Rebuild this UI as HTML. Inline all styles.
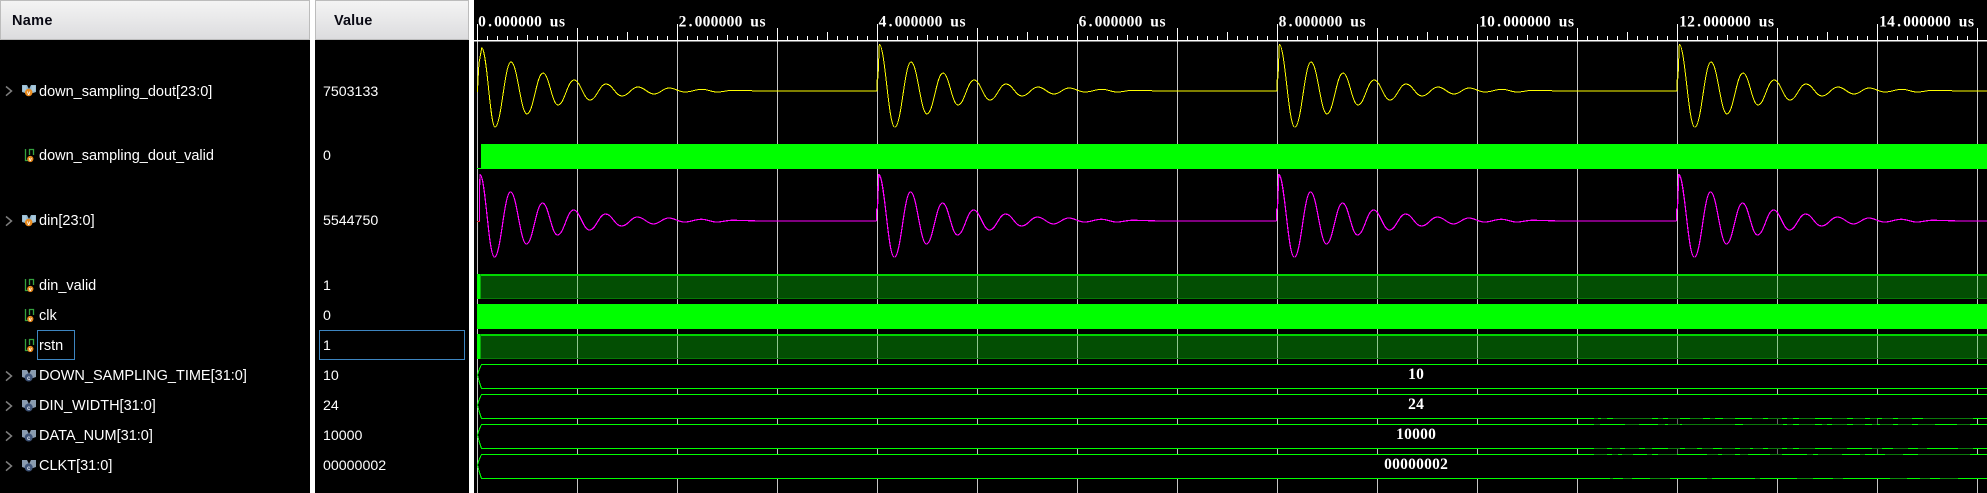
<!DOCTYPE html>
<html lang="en">
<head>
<meta charset="utf-8">
<title>Waveform</title>
<style>
html,body{margin:0;padding:0;background:#000;width:1987px;height:493px;overflow:hidden}
svg{display:block}
.n{font-family:"Liberation Sans",sans-serif;font-size:14.5px;fill:#fff}
.v{font-family:"Liberation Sans",sans-serif;font-size:14.2px;fill:#fff}
.h{font-family:"Liberation Sans",sans-serif;font-size:14.5px;font-weight:bold;fill:#0a0a14}
.r{font-family:"Liberation Serif",serif;font-size:15.5px;font-weight:bold;fill:#fff;text-anchor:middle}
.c{shape-rendering:crispEdges}
</style>
</head>
<body>
<svg width="1987" height="493" viewBox="0 0 1987 493" xmlns="http://www.w3.org/2000/svg">
<defs>
<linearGradient id="hg" x1="0" y1="0" x2="0" y2="1"><stop offset="0" stop-color="#f4f4f4"/><stop offset="1" stop-color="#dcdcde"/></linearGradient>
<path id="t" d="M495 127C501.4 127 504.6 62 511 62C517.4 62 520.6 114 527 114C533.4 114 536.6 73 543 73C549 73 552 105 558 105C564.4 105 567.6 80 574 80C580.4 80 583.6 100 590 100C596.4 100 599.6 84 606 84C612.4 84 615.6 96 622 96C628.4 96 631.6 87 638 87C644.4 87 647.6 94 654 94C660 94 663 88 669 88C675.4 88 678.6 92 685 92C691.8 92 695.2 89.3 702 89.3C708 89.3 711 92 717 92C723.4 92 726.6 90.3 733 90.3C745 90.3 760 91.4 777 91L877 91"/>
<path id="h" d="M877 91V80L878 78L879.3 44.5C885 44.5 888.5 127 894.7 127"/>
<g id="bus">
<path d="M22 85h5l2 4 2-4h5v7l-3 1h-8l-3-1z" fill="#8db4cc"/>
<path d="M22.5 85.5h4v6h-4zM31.5 85.5h4v6h-4z" fill="#a9c9dc"/>
<circle cx="28.7" cy="92.5" r="3.8" fill="#e98a1c"/>
<text x="28.7" y="95" font-family="Liberation Sans,sans-serif" font-size="6" font-weight="bold" fill="#fff" text-anchor="middle">v</text>
</g>
<g id="par">
<path d="M22 85h5l2 4 2-4h5v7l-3 1h-8l-3-1z" fill="#8a9cb0"/>
<circle cx="28.7" cy="92.5" r="4" fill="#3f5478"/>
<text x="28.7" y="95" font-family="Liberation Sans,sans-serif" font-size="6" font-weight="bold" fill="#dfe6f0" text-anchor="middle">c</text>
</g>
<g id="bit">
<path d="M25.5 149V160.5H28M29.5 155V149.5H33.5V155" fill="none" stroke="#35a33f" stroke-width="1.3"/>
<circle cx="30.3" cy="159" r="3.1" fill="#e98a1c"/>
<text x="30.3" y="161.2" font-family="Liberation Sans,sans-serif" font-size="5.5" font-weight="bold" fill="#fff" text-anchor="middle">v</text>
</g>
<path id="chev" d="M6 86.5L11.5 91L6 95.7" fill="none" stroke="#7f7f7f" stroke-width="1.5"/>
</defs>

<rect width="1987" height="493" fill="#000"/>

<!-- panels -->
<rect x="310" y="0" width="5" height="493" fill="#fff"/>
<rect x="469" y="0" width="5" height="493" fill="#fff"/>

<!-- headers -->
<rect x="0.5" y="0.5" width="309" height="39" fill="url(#hg)" stroke="#bcbcbc" class="c"/>
<rect x="315.5" y="0.5" width="153" height="39" fill="url(#hg)" stroke="#bcbcbc" class="c"/>
<text class="h" x="12" y="25" letter-spacing=".3">Name</text>
<text class="h" x="334" y="25" letter-spacing=".1">Value</text>

<!-- chevrons and icons -->
<use href="#chev"/><use href="#bus"/>
<use href="#bit"/>
<use href="#chev" y="130"/><use href="#bus" y="130"/>
<use href="#bit" y="130"/>
<use href="#bit" y="160"/>
<use href="#bit" y="190"/>
<use href="#chev" y="285"/><use href="#par" y="285"/>
<use href="#chev" y="315"/><use href="#par" y="315"/>
<use href="#chev" y="345"/><use href="#par" y="345"/>
<use href="#chev" y="375"/><use href="#par" y="375"/>

<!-- names -->
<text class="n" x="39" y="96">down_sampling_dout[23:0]</text>
<text class="n" x="39" y="160">down_sampling_dout_valid</text>
<text class="n" x="39" y="225">din[23:0]</text>
<text class="n" x="39" y="290">din_valid</text>
<text class="n" x="39" y="320">clk</text>
<text class="n" x="39" y="350">rstn</text>
<text class="n" x="39" y="380">DOWN_SAMPLING_TIME[31:0]</text>
<text class="n" x="39" y="410">DIN_WIDTH[31:0]</text>
<text class="n" x="39" y="440">DATA_NUM[31:0]</text>
<text class="n" x="39" y="470">CLKT[31:0]</text>

<!-- values -->
<text class="v" x="323" y="96">7503133</text>
<text class="v" x="323" y="160">0</text>
<text class="v" x="323" y="225">5544750</text>
<text class="v" x="323" y="290">1</text>
<text class="v" x="323" y="320">0</text>
<text class="v" x="323" y="350">1</text>
<text class="v" x="323" y="380">10</text>
<text class="v" x="323" y="410">24</text>
<text class="v" x="323" y="440">10000</text>
<text class="v" x="323" y="470">00000002</text>

<!-- selection -->
<rect x="37.5" y="330.5" width="37" height="29" fill="none" stroke="#3d85c0" class="c"/>
<rect x="319.5" y="330.5" width="145" height="29" fill="none" stroke="#3d85c0" class="c"/>

<!-- grid -->
<g class="c">
<line x1="477" x2="1987" y1="266.5" y2="266.5" stroke="#c6c6c6" stroke-width="453" stroke-dasharray="1 99"/>
<rect x="474" y="40" width="1513" height="1.5" fill="#fff"/>
<line x1="487" x2="1987" y1="38" y2="38" stroke="#fff" stroke-width="4" stroke-dasharray="1 9"/>
<line x1="527" x2="1987" y1="37.5" y2="37.5" stroke="#fff" stroke-width="5" stroke-dasharray="1 199"/>
<line x1="627" x2="1987" y1="36" y2="36" stroke="#fff" stroke-width="8" stroke-dasharray="1 199"/>
<line x1="577" x2="1987" y1="34" y2="34" stroke="#fff" stroke-width="12" stroke-dasharray="1 199"/>
<line x1="477" x2="1987" y1="32" y2="32" stroke="#fff" stroke-width="16" stroke-dasharray="1 199"/>
</g>

<!-- ruler labels -->
<text class="r" y="26.5" x="482 490 498 506 514 522 530 538 554 562">0.000000us</text>
<text class="r" y="26.5" x="682.5 690.5 698.5 706.5 714.5 722.5 730.5 738.5 754.5 762.5">2.000000us</text>
<text class="r" y="26.5" x="882.5 890.5 898.5 906.5 914.5 922.5 930.5 938.5 954.5 962.5">4.000000us</text>
<text class="r" y="26.5" x="1082.5 1090.5 1098.5 1106.5 1114.5 1122.5 1130.5 1138.5 1154.5 1162.5">6.000000us</text>
<text class="r" y="26.5" x="1282.5 1290.5 1298.5 1306.5 1314.5 1322.5 1330.5 1338.5 1354.5 1362.5">8.000000us</text>
<text class="r" y="26.5" x="1483 1491 1499 1507 1515 1523 1531 1539 1547 1563 1571">10.000000us</text>
<text class="r" y="26.5" x="1683 1691 1699 1707 1715 1723 1731 1739 1747 1763 1771">12.000000us</text>
<text class="r" y="26.5" x="1883 1891 1899 1907 1915 1923 1931 1939 1947 1963 1971">14.000000us</text>

<!-- yellow wave -->
<g fill="none" stroke="#ffff00" stroke-width="1" class="c">
<path d="M477.5 92L478 80L479 63L481.7 48C487 48 490 127 495 127"/>
<use href="#t"/><use href="#t" x="400"/><use href="#t" x="800"/><use href="#t" x="1200"/>
<use href="#h"/><use href="#h" x="400"/><use href="#h" x="800"/>
</g>

<!-- valid bar -->
<rect x="481" y="144" width="1506" height="25" fill="#00ff00" class="c"/>
<rect x="477" y="168" width="4" height="1" fill="#00ff00" class="c"/>

<!-- magenta wave -->
<rect x="477" y="221" width="3" height="1" fill="#e02020" class="c"/>
<g fill="none" stroke="#ff00ff" stroke-width="1.2" class="c" transform="translate(-0.5 130)">
<path d="M480 91V60L480.5 44.5C486 44.5 489 127 495 127"/>
<use href="#t"/><use href="#t" x="400"/><use href="#t" x="800"/><use href="#t" x="1200"/>
<use href="#h"/><use href="#h" x="400"/><use href="#h" x="800"/>
</g>

<!-- din_valid / clk / rstn -->
<g class="c">
<rect x="477" y="274" width="1510" height="25" fill="#034e03"/>
<line x1="477" x2="1987" y1="286.5" y2="286.5" stroke="#8ec58e" stroke-width="23" stroke-dasharray="1 99"/>
<rect x="477" y="274" width="1510" height="2" fill="#00d800"/>
<rect x="477" y="298" width="1510" height="1" fill="#067a06"/>
<rect x="477" y="274" width="3" height="25" fill="#00ff00"/>
<rect x="480" y="274" width="1" height="25" fill="#08a808"/>

<rect x="477" y="304" width="1510" height="25" fill="#00ff00"/>

<rect x="477" y="334" width="1510" height="25" fill="#034e03"/>
<line x1="477" x2="1987" y1="346.5" y2="346.5" stroke="#8ec58e" stroke-width="23" stroke-dasharray="1 99"/>
<rect x="477" y="334" width="1510" height="2" fill="#00d800"/>
<rect x="477" y="358" width="1510" height="1" fill="#067a06"/>
<rect x="477" y="334" width="3" height="25" fill="#00ff00"/>
<rect x="480" y="334" width="1" height="25" fill="#08a808"/>
</g>

<!-- buses -->
<g fill="#000" stroke="#00ff00" stroke-width="1" class="c">
<path d="M1988 364.5H481.5L479 370L477.5 375L479 381L481.5 388.5H1988"/>
<path d="M1988 394.5H481.5L479 400L477.5 405L479 411L481.5 418.5H1988"/>
<path d="M1988 424.5H481.5L479 430L477.5 435L479 441L481.5 448.5H1988"/>
<path d="M1988 454.5H481.5L479 460L477.5 465L479 471L481.5 478.5H1988"/>
</g>

<!-- faded region -->
<g class="c" fill="none" stroke-width="1">
<path d="M1594 418.5H1973M1594 424.5H1970M1594 448.5H1973M1594 454.5H1970" stroke="#0a7a0a"/>
<path stroke="#00ff00" d="M1598 418.5H1601M1607 418.5H1613M1652 418.5H1658M1663 418.5H1668M1680 418.5H1690M1703 418.5H1710M1715 418.5H1723M1735 418.5H1752M1763 418.5H1768M1782 418.5H1787M1793 418.5H1799M1815 418.5H1832M1847 418.5H1853M1865 418.5H1870M1877 418.5H1882M1893 418.5H1898M1912 418.5H1923"/>
<path stroke="#00ff00" d="M1600 424.5H1625M1639 424.5H1658M1665 424.5H1668M1680 424.5H1682M1735 424.5H1743M1783 424.5H1787M1793 424.5H1799M1815 424.5H1822M1827 424.5H1832M1847 424.5H1853M1865 424.5H1872M1877 424.5H1880M1893 424.5H1898M1912 424.5H1918M1935 424.5H1957"/>
<path stroke="#00ff00" d="M1607 448.5H1612M1620 448.5H1625M1639 448.5H1645M1652 448.5H1668M1680 448.5H1685M1697 448.5H1702M1713 448.5H1722M1735 448.5H1740M1750 448.5H1753M1763 448.5H1768M1782 448.5H1787M1793 448.5H1799M1815 448.5H1832M1847 448.5H1872M1882 448.5H1893M1908 448.5H1918M1927 448.5H1958"/>
<path stroke="#00ff00" d="M1607 454.5H1612M1618 454.5H1622M1633 454.5H1647M1652 454.5H1658M1677 454.5H1707M1718 454.5H1722M1735 454.5H1740M1748 454.5H1770M1782 454.5H1807M1813 454.5H1818M1842 454.5H1860M1865 454.5H1885M1903 454.5H1918"/>
<path stroke="#0a8a0a" d="M1610 478.5H1613M1623 478.5H1632M1650 478.5H1670M1707 478.5H1712M1755 478.5H1760M1797 478.5H1813M1833 478.5H1843M1890 478.5H1907M1920 478.5H1930M1940 478.5H1958"/>
<path stroke="#6a6a6a" d="M1677.5 419V424M1777.5 419V424M1877.5 419V424M1677.5 449V454M1777.5 449V454M1877.5 449V454"/>
</g>

<!-- bus labels -->
<text class="r" y="379" x="1412 1420">10</text>
<text class="r" y="409" x="1412 1420">24</text>
<text class="r" y="439" x="1400 1408 1416 1424 1432">10000</text>
<text class="r" y="469" x="1388 1396 1404 1412 1420 1428 1436 1444">00000002</text>
</svg>
</body>
</html>
